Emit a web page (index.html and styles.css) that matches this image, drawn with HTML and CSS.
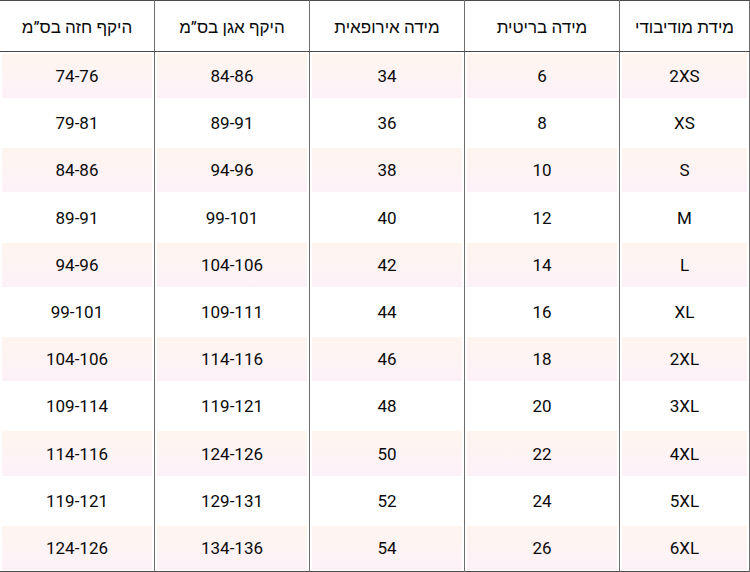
FILE: index.html
```html
<!DOCTYPE html>
<html lang="he" dir="rtl">
<head>
<meta charset="utf-8">
<link rel="stylesheet" href="styles.css">
</head>
<body>
<table class="sizes">
  <colgroup>
    <col class="c-narrow"><col class="c"><col class="c"><col class="c"><col class="c">
  </colgroup>
  <thead>
    <tr><th>מידת מודיבודי</th><th>מידה בריטית</th><th>מידה אירופאית</th><th>היקף אגן בס”מ</th><th>היקף חזה בס”מ</th></tr>
  </thead>
  <tbody>
    <tr class="alt"><td>2XS</td><td>6</td><td>34</td><td>84-86</td><td>74-76</td></tr>
    <tr><td>XS</td><td>8</td><td>36</td><td>89-91</td><td>79-81</td></tr>
    <tr class="alt"><td>S</td><td>10</td><td>38</td><td>94-96</td><td>84-86</td></tr>
    <tr><td>M</td><td>12</td><td>40</td><td>99-101</td><td>89-91</td></tr>
    <tr class="alt"><td>L</td><td>14</td><td>42</td><td>104-106</td><td>94-96</td></tr>
    <tr><td>XL</td><td>16</td><td>44</td><td>109-111</td><td>99-101</td></tr>
    <tr class="alt"><td>2XL</td><td>18</td><td>46</td><td>114-116</td><td>104-106</td></tr>
    <tr><td>3XL</td><td>20</td><td>48</td><td>119-121</td><td>109-114</td></tr>
    <tr class="alt"><td>4XL</td><td>22</td><td>50</td><td>124-126</td><td>114-116</td></tr>
    <tr><td>5XL</td><td>24</td><td>52</td><td>129-131</td><td>119-121</td></tr>
    <tr class="alt"><td>6XL</td><td>26</td><td>54</td><td>134-136</td><td>124-126</td></tr>
  </tbody>
</table>
</body>
</html>
```

FILE: styles.css
```css
html, body {
  margin: 0;
  padding: 0;
  background: #fff;
}
.sizes {
  width: 750px;
  height: 572px;
  border-collapse: collapse;
  table-layout: fixed;
  font-family: Roboto, "Liberation Sans", sans-serif;
  font-size: 17px;
  color: #0a0a0a;
  border: 1px solid #4a4a4a;
}
.c-narrow { width: 130px; }
.c { width: 155px; }
.sizes th, .sizes td {
  padding: 2px 2px 1px;
  text-align: center;
  vertical-align: middle;
  border-left: 1px solid #6e6e6e;
  border-right: 1px solid #6e6e6e;
  font-weight: normal;
  background-clip: content-box;
}
.sizes thead th {
  height: 46px;
  border-bottom: 1px solid #4a4a4a;
  border-top: 1px solid #4a4a4a;
  padding-top: 3px;
}
.sizes tbody tr { height: 47.1px; }
.sizes tbody td { height: 44px; }
.sizes tr.alt td {
  background-image: linear-gradient(to bottom, #fef5ee, #fdf1f9);
}
```
